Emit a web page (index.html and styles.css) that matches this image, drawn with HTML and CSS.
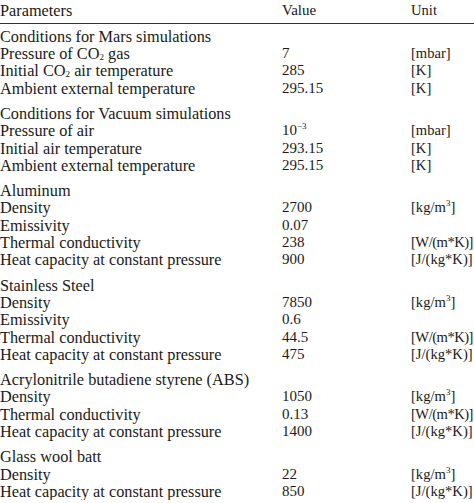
FILE: index.html
```html
<!DOCTYPE html>
<html>
<head>
<meta charset="utf-8">
<link rel="stylesheet" href="styles.css">
</head>
<body>
<div class="table">
  <div class="head">
    <div class="p">Parameters</div><div>Value</div><div class="u">Unit</div>
  </div>
  <div class="group">
    <div class="title p">Conditions for Mars simulations</div>
    <div class="row"><div class="p">Pressure of CO<sub>2</sub> gas</div><div>7</div><div class="u">[mbar]</div></div>
    <div class="row"><div class="p">Initial CO<sub>2</sub> air temperature</div><div>285</div><div class="u">[K]</div></div>
    <div class="row"><div class="p">Ambient external temperature</div><div>295.15</div><div class="u">[K]</div></div>
  </div>
  <div class="group">
    <div class="title p">Conditions for Vacuum simulations</div>
    <div class="row"><div class="p">Pressure of air</div><div>10<sup>&minus;3</sup></div><div class="u">[mbar]</div></div>
    <div class="row"><div class="p">Initial air temperature</div><div>293.15</div><div class="u">[K]</div></div>
    <div class="row"><div class="p">Ambient external temperature</div><div>295.15</div><div class="u">[K]</div></div>
  </div>
  <div class="group">
    <div class="title p">Aluminum</div>
    <div class="row"><div class="p">Density</div><div>2700</div><div class="u">[kg/m<sup>3</sup>]</div></div>
    <div class="row"><div class="p">Emissivity</div><div>0.07</div><div class="u"></div></div>
    <div class="row"><div class="p">Thermal conductivity</div><div>238</div><div class="u tight">[W/(m*K)]</div></div>
    <div class="row"><div class="p">Heat capacity at constant pressure</div><div>900</div><div class="u">[J/(kg*K)]</div></div>
  </div>
  <div class="group">
    <div class="title p">Stainless Steel</div>
    <div class="row"><div class="p">Density</div><div>7850</div><div class="u">[kg/m<sup>3</sup>]</div></div>
    <div class="row"><div class="p">Emissivity</div><div>0.6</div><div class="u"></div></div>
    <div class="row"><div class="p">Thermal conductivity</div><div>44.5</div><div class="u tight">[W/(m*K)]</div></div>
    <div class="row"><div class="p">Heat capacity at constant pressure</div><div>475</div><div class="u">[J/(kg*K)]</div></div>
  </div>
  <div class="group">
    <div class="title p">Acrylonitrile butadiene styrene (ABS)</div>
    <div class="row"><div class="p">Density</div><div>1050</div><div class="u">[kg/m<sup>3</sup>]</div></div>
    <div class="row"><div class="p">Thermal conductivity</div><div>0.13</div><div class="u tight">[W/(m*K)]</div></div>
    <div class="row"><div class="p">Heat capacity at constant pressure</div><div>1400</div><div class="u">[J/(kg*K)]</div></div>
  </div>
  <div class="group">
    <div class="title p">Glass wool batt</div>
    <div class="row"><div class="p">Density</div><div>22</div><div class="u">[kg/m<sup>3</sup>]</div></div>
    <div class="row"><div class="p">Heat capacity at constant pressure</div><div>850</div><div class="u">[J/(kg*K)]</div></div>
  </div>
</div>
</body>
</html>
```
FILE: styles.css
```css
html, body {
  margin: 0;
  padding: 0;
  background: #fff;
}
body {
  font-family: "Liberation Serif", "DejaVu Serif", serif;
  font-size: 15px;
  color: #1a1a1a;
  width: 474px;
  overflow: hidden;
}
.head, .row {
  display: grid;
  grid-template-columns: 282px 129px 1fr;
  line-height: 17.3px;
  white-space: nowrap;
}
.p {
  font-size: 16.3px;
}
.u {
  font-size: 14.6px;
}
.tight {
  letter-spacing: -0.5px;
}
.head {
  padding-top: 2px;
  padding-bottom: 3.5px;
  border-bottom: 1.5px solid #333;
}
.group {
  padding-top: 4px;
}
.group + .group {
  padding-top: 8px;
}
.title {
  line-height: 17.3px;
  white-space: nowrap;
}
sub, sup {
  font-size: 9px;
  line-height: 0;
  position: relative;
  vertical-align: baseline;
}
sub { top: 1px; }
sup { top: -6px; }
```
